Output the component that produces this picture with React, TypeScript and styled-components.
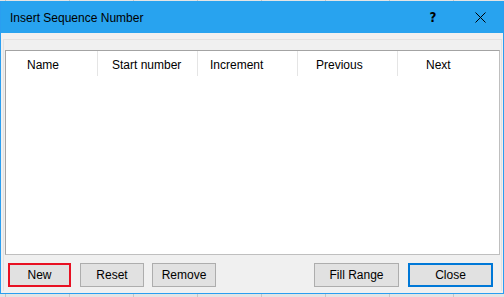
import React from 'react';
import styled, { createGlobalStyle } from 'styled-components';

const GlobalStyle = createGlobalStyle`
  html, body {
    margin: 0;
    padding: 0;
  }
  body {
    width: 504px;
    height: 297px;
    overflow: hidden;
    background-color: #e4e4e4;
    background-image: repeating-linear-gradient(
      to right,
      transparent 0,
      transparent 5px,
      #c6c6c6 5px,
      #c6c6c6 6px,
      transparent 6px,
      transparent 64px
    );
    font-family: "Liberation Sans", Arial, sans-serif;
    font-size: 12px;
    color: #000;
  }
`;

const Window = styled.div`
  margin-top: 1px;
  width: 504px;
  height: 293px;
  box-sizing: border-box;
  border: 1px solid #2a9ef0;
  border-top: none;
  display: flex;
  flex-direction: column;
  background: #f0f0f0;
`;

const TitleBar = styled.div`
  height: 32px;
  flex-shrink: 0;
  background: #28a3ef;
  display: flex;
  align-items: center;
  padding-left: 9px;
`;

const Title = styled.div`
  flex: 1;
  font-size: 12px;
  padding-top: 1px;
`;

const TitleButton = styled.div<{ $w: number }>`
  width: ${p => p.$w}px;
  height: 32px;
  display: flex;
  align-items: center;
  justify-content: center;
`;

const Help = styled.span`
  font-size: 14px;
  font-weight: bold;
  font-family: "DejaVu Sans", sans-serif;
  transform: scaleX(0.85);
  margin-right: 2px;
`;

const Panel = styled.div`
  flex: 1;
  margin: 6px 1px 2px 2px;
  border-top: 1px solid #e2e2e2;
  border-left: 1px solid #e2e2e2;
  border-right: 1px solid #e2e2e2;
  padding: 10px 1px 0 1px;
  display: flex;
  flex-direction: column;
`;

const ListBox = styled.div`
  height: 205px;
  box-sizing: border-box;
  border: 1px solid #a3a3a3;
  border-right-color: #bfbfbf;
  border-bottom-color: #bfbfbf;
  background: #fff;
`;

const HeaderRow = styled.div`
  display: flex;
  height: 25px;
`;

const HeaderCell = styled.div<{ $w: number; $pad: number; $last?: boolean }>`
  width: ${p => p.$w}px;
  box-sizing: border-box;
  padding-left: ${p => p.$pad}px;
  padding-top: 2px;
  border-right: ${p => (p.$last ? 'none' : '1px solid #e5e5e5')};
  display: flex;
  align-items: center;
  font-size: 12px;
  white-space: nowrap;
`;

const ButtonRow = styled.div`
  display: flex;
  margin-top: 8px;
  padding: 0 7px 0 3px;
`;

const Spacer = styled.div`
  flex: 1;
`;

const Button = styled.button<{ $w: number; $accent?: string; $gap?: number }>`
  width: ${p => p.$w}px;
  height: 24px;
  margin-right: ${p => p.$gap ?? 0}px;
  box-sizing: border-box;
  background: #e1e1e1;
  border: ${p => (p.$accent ? `2px solid ${p.$accent}` : '1px solid #adadad')};
  font-family: "Liberation Sans", Arial, sans-serif;
  font-size: 12px;
  color: #000;
  padding: 0;
`;

const columns = [
  { label: 'Name', w: 92, pad: 21 },
  { label: 'Start number', w: 100, pad: 14 },
  { label: 'Increment', w: 100, pad: 12 },
  { label: 'Previous', w: 100, pad: 18 },
  { label: 'Next', w: 99, pad: 28 },
];

export default function App() {
  return (
    <>
      <GlobalStyle />
      <Window>
        <TitleBar>
          <Title>Insert Sequence Number</Title>
          <TitleButton $w={46}>
            <Help>?</Help>
          </TitleButton>
          <TitleButton $w={46}>
            <svg width="11" height="11" viewBox="0 0 11 11">
              <path d="M0.5 0.5 L10.5 10.5 M10.5 0.5 L0.5 10.5" stroke="#000" strokeWidth="1" />
            </svg>
          </TitleButton>
        </TitleBar>
        <Panel>
          <ListBox>
            <HeaderRow>
              {columns.map((c, i) => (
                <HeaderCell key={c.label} $w={c.w} $pad={c.pad} $last={i === columns.length - 1}>
                  {c.label}
                </HeaderCell>
              ))}
            </HeaderRow>
          </ListBox>
          <ButtonRow>
            <Button $w={63} $accent="#e81123" $gap={9}>New</Button>
            <Button $w={64} $gap={8}>Reset</Button>
            <Button $w={64}>Remove</Button>
            <Spacer />
            <Button $w={85} $gap={9}>Fill Range</Button>
            <Button $w={85} $accent="#0078d7">Close</Button>
          </ButtonRow>
        </Panel>
      </Window>
    </>
  );
}
